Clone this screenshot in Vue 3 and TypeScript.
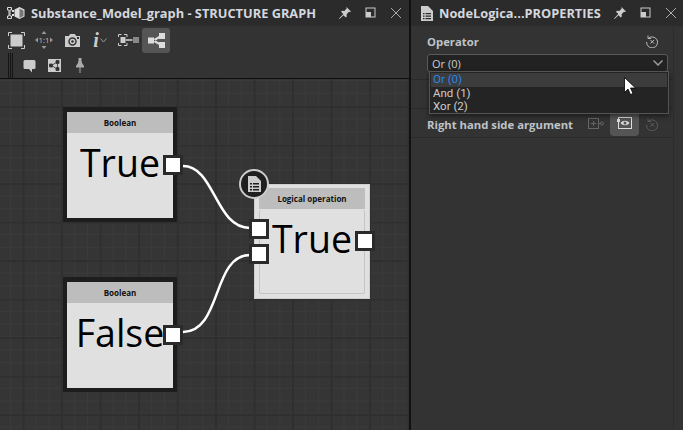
<script setup lang="ts">
interface BoolNode {
  title: string
  value: string
  top: number
}

const boolNodes: BoolNode[] = [
  { title: 'Boolean', value: 'True', top: 28 },
  { title: 'Boolean', value: 'False', top: 198 },
]

const options = ['Or (0)', 'And (1)', 'Xor (2)']
</script>

<template>
  <div class="app">
    <section class="panel panel--graph">
      <header class="tab">
        <svg class="tab__icon" width="18" height="14" viewBox="0 0 18 14" aria-hidden="true">
          <path d="M.5 1.500h4v2.500H3v6h1.500v2.500h-4V10H2V4H.5z" fill="none" stroke="#ddd" />
          <path d="M5 4h2v2H5zM5 8h2v2H5z" fill="#ddd" />
          <path d="M12.500 1l5 2.500v7l-5 2.500-5-2.500v-7z" fill="#ddd" />
          <path d="M12.500 2.500V12l4-2V4.500z" fill="#777" />
        </svg>
        <span class="tab__title">Substance_Model_graph - STRUCTURE GRAPH</span>
        <div class="tab__actions">
          <svg width="14" height="14" viewBox="0 0 14 14" aria-hidden="true">
            <path d="M8.500 1l4.500 4.500-1 .6-1-.3-2.400 2.400.2 2.300-1 1-2.300-2.300L1.500 13 1 12.500l4.300-4.500L3 5.700l1-1 2.300.2L8.700 2.500 8.400 1.500z" fill="#ccc" />
          </svg>
          <svg width="12" height="12" viewBox="0 0 12 12" aria-hidden="true">
            <rect x="1" y="1" width="9" height="9" fill="none" stroke="#ccc" />
            <rect x="1" y="5" width="5" height="5" fill="#ccc" />
          </svg>
          <svg width="12" height="12" viewBox="0 0 12 12" aria-hidden="true">
            <path d="M1 1l10 10M11 1L1 11" stroke="#aaa" fill="none" />
          </svg>
        </div>
      </header>

      <div class="toolbar">
        <div class="toolbar__row">
          <button type="button" class="tool">
            <svg width="17" height="17" viewBox="0 0 17 17" aria-hidden="true">
              <rect x="2.500" y="2.500" width="12" height="12" fill="#ccc" />
              <path d="M.5 4V.5H4M13 .5h3.500V4M16.500 13v3.500H13M4 16.500H.5V13" fill="none" stroke="#ccc" />
            </svg>
          </button>
          <button type="button" class="tool">
            <svg width="20" height="20" viewBox="0 0 20 20" aria-hidden="true">
              <path d="M10 1l2.500 3h-5zM10 19l-2.500-3h5zM1 10l3-2.500v5zM19 10l-3 2.500v-5z" fill="#999" />
              <text x="10" y="13" class="tool__ratio">1:1</text>
            </svg>
          </button>
          <button type="button" class="tool">
            <svg width="17" height="15" viewBox="0 0 17 15" aria-hidden="true">
              <path d="M1 3h4l1-2h5l1 2h4v11H1z" fill="#ccc" />
              <circle cx="8.500" cy="8.500" r="3.500" fill="none" stroke="#333" stroke-width="1.500" />
              <circle cx="8.500" cy="8.500" r="1.300" fill="#333" />
              <rect x="13" y="4" width="2" height="2" fill="#333" />
            </svg>
          </button>
          <button type="button" class="tool tool--info">
            <span class="tool__i">i</span>
            <svg width="7" height="5" viewBox="0 0 7 5" aria-hidden="true">
              <path d="M.5 .5L3.500 4 6.500 .5" fill="none" stroke="#999" />
            </svg>
          </button>
          <button type="button" class="tool">
            <svg width="21" height="12" viewBox="0 0 21 12" aria-hidden="true">
              <path d="M.5 3V.5h3M.5 9v2.500h3M6 .5h3V3M6 11.500h3V9" fill="none" stroke="#ccc" />
              <rect x="2.500" y="3" width="5" height="6" fill="#ccc" />
              <rect x="7.500" y="5" width="7" height="2" fill="#aaa" />
              <rect x="15" y="3" width="6" height="6" fill="#888" />
            </svg>
          </button>
          <button type="button" class="tool tool--active">
            <svg width="17" height="15" viewBox="0 0 17 15" aria-hidden="true">
              <rect x="0" y="4.500" width="6" height="6" fill="#ddd" />
              <rect x="11" y="0" width="6" height="6" fill="#ddd" />
              <rect x="11" y="9" width="6" height="6" fill="#ddd" />
              <path d="M5 6.500l6-3.500v2.500L6 8.500zM5 8.500l6 3.500V9.500L6 6.500z" fill="#ddd" />
            </svg>
          </button>
        </div>
        <div class="toolbar__row toolbar__row--second">
          <span class="grip" />
          <button type="button" class="tool tool--small">
            <svg width="13" height="14" viewBox="0 0 13 14" aria-hidden="true">
              <path d="M2 1h9a1.500 1.500 0 0 1 1.500 1.500v6A1.500 1.500 0 0 1 11 10H9v3.500L6 10H2A1.500 1.500 0 0 1 .5 8.500v-6A1.500 1.500 0 0 1 2 1z" fill="#ccc" />
            </svg>
          </button>
          <button type="button" class="tool tool--small">
            <svg width="13" height="13" viewBox="0 0 13 13" aria-hidden="true">
              <path d="M0 0h13v13H0z" fill="#ccc" />
              <path d="M1.500 5h3v3h-3zM8 1.500h3v3H8zM8 8.500h3v3H8zM4.500 6L8 3.500M4.500 7L8 9.500M9.500 4.500v4" fill="#333" stroke="#333" stroke-width=".8" />
            </svg>
          </button>
          <button type="button" class="tool tool--small">
            <svg width="10" height="15" viewBox="0 0 10 15" aria-hidden="true">
              <path d="M3.500 0h3v2l.5 3L9 8v1.500H1V8l2-3 .5-3z" fill="#aaa" />
              <path d="M5 9v6" stroke="#aaa" />
            </svg>
          </button>
        </div>
      </div>

      <div class="graph">
        <svg class="wires" width="409" height="430" viewBox="0 0 409 430" aria-hidden="true">
          <path d="M183 166C215 166 215 228 250 228" fill="none" stroke="#fff" stroke-width="2.500" />
          <path d="M183 332C222 332 212 255 250 255" fill="none" stroke="#fff" stroke-width="2.500" />
        </svg>

        <div
          v-for="node in boolNodes"
          :key="node.value"
          class="node"
          :style="{ top: node.top + 'px' }"
        >
          <div class="node__head">{{ node.title }}</div>
          <div class="node__value">{{ node.value }}</div>
          <span class="port port--out" />
        </div>

        <div class="logic">
          <div class="logic__head">Logical operation</div>
          <div class="logic__value">True</div>
          <span class="port port--a" />
          <span class="port port--b" />
          <span class="port port--c" />
          <span class="badge">
            <svg width="13" height="16" viewBox="0 0 13 16" aria-hidden="true">
              <path d="M0 0h8l5 5v11H0z" fill="#ccc" />
              <path d="M2 7h2v1.500H2zM5 7h6v1.500H5zM2 10h2v1.500H2zM5 10h6v1.500H5zM2 13h2v1.500H2zM5 13h6v1.500H5z" fill="#1f1f1f" />
            </svg>
          </span>
        </div>
      </div>
    </section>

    <section class="panel panel--props">
      <header class="tab tab--props">
        <svg class="tab__icon" width="12" height="15" viewBox="0 0 12 15" aria-hidden="true">
          <path d="M0 0h7l5 5v10H0z" fill="#ccc" />
          <path d="M2 7h1.500v1.200H2zM4.500 7H10v1.200H4.500zM2 9.500h1.500v1.200H2zM4.500 9.500H10v1.200H4.500zM2 12h1.500v1.200H2zM4.500 12H10v1.200H4.500z" fill="#2c2c2c" />
        </svg>
        <span class="tab__title">NodeLogica...PROPERTIES</span>
        <div class="tab__actions">
          <svg width="14" height="14" viewBox="0 0 14 14" aria-hidden="true">
            <path d="M8.500 1l4.500 4.500-1 .6-1-.3-2.400 2.400.2 2.300-1 1-2.300-2.300L1.500 13 1 12.500l4.300-4.500L3 5.700l1-1 2.300.2L8.700 2.500 8.400 1.500z" fill="#ccc" />
          </svg>
          <svg width="12" height="12" viewBox="0 0 12 12" aria-hidden="true">
            <rect x="1" y="1" width="9" height="9" fill="none" stroke="#ccc" />
            <rect x="1" y="5" width="5" height="5" fill="#ccc" />
          </svg>
          <svg width="12" height="12" viewBox="0 0 12 12" aria-hidden="true">
            <path d="M1 1l10 10M11 1L1 11" stroke="#aaa" fill="none" />
          </svg>
        </div>
      </header>

      <div class="props">
        <div class="prop prop--operator">
          <div class="prop__line">
            <span class="prop__label">Operator</span>
            <svg class="reset" width="14" height="14" viewBox="0 0 14 14" aria-hidden="true">
              <path d="M3 1.500v3h3M3.200 4.500A5.500 5.500 0 1 1 1.600 8" fill="none" stroke="#bbb" />
              <path d="M5.500 6l3.500 3.500M9 6L5.500 9.500" stroke="#bbb" fill="none" />
            </svg>
          </div>
          <div class="combo">
            <span>Or (0)</span>
            <svg width="10" height="6" viewBox="0 0 10 6" aria-hidden="true">
              <path d="M.5 .5L5 5 9.500 .5" fill="none" stroke="#999" stroke-width="1.500" />
            </svg>
          </div>
        </div>
        <div class="prop prop--hidden" />
        <div class="prop prop--right">
          <span class="prop__label">Right hand side argument</span>
          <div class="prop__tools">
            <span class="mini">
              <svg width="16" height="12" viewBox="0 0 16 12" aria-hidden="true">
                <rect x=".5" y=".5" width="10" height="10" fill="none" stroke="#666" />
                <path d="M3 5.500h5M5.500 3v5M10 5.500h3" stroke="#666" fill="none" />
                <circle cx="14" cy="5.500" r="1.500" fill="none" stroke="#666" />
              </svg>
            </span>
            <span class="mini mini--on">
              <svg width="15" height="12" viewBox="0 0 15 12" aria-hidden="true">
                <rect x="1.500" y=".5" width="13" height="11" fill="none" stroke="#ddd" />
                <rect x="0" y="2" width="3" height="3" fill="#ddd" />
                <path d="M3.500 6C6 3 10 3 12.500 6 10 9 6 9 3.500 6z" fill="#ddd" />
                <circle cx="8" cy="6" r="1.500" fill="#555" />
              </svg>
            </span>
            <svg class="reset" width="14" height="14" viewBox="0 0 14 14" aria-hidden="true">
              <path d="M3 1.500v3h3M3.200 4.500A5.500 5.500 0 1 1 1.600 8" fill="none" stroke="#5c5c5c" />
              <path d="M5.500 6l3.500 3.500M9 6L5.500 9.500" stroke="#5c5c5c" fill="none" />
            </svg>
          </div>
        </div>
      </div>

      <ul class="popup">
        <li
          v-for="(option, i) in options"
          :key="option"
          class="popup__item"
          :class="{ 'popup__item--current': i === 0 }"
        >
          {{ option }}
        </li>
      </ul>

      <svg class="cursor" width="12" height="18" viewBox="0 0 12 18" aria-hidden="true">
        <path d="M.5 .5v15l3.500-3.500 2.500 5.500 2.500-1-2.500-5.500h5z" fill="#fff" stroke="#000" stroke-width=".8" />
      </svg>
    </section>
  </div>
</template>

<style>
html,
body {
  margin: 0;
  background: #000;
}
</style>

<style scoped>
.app {
  display: flex;
  width: 683px;
  height: 430px;
  overflow: hidden;
  background: #111;
  font-family: 'Open Sans', 'Noto Sans', sans-serif;
}

.panel {
  position: relative;
  display: flex;
  flex-direction: column;
  background: #333;
}

.panel--graph {
  width: 409px;
  flex: none;
}

.panel--props {
  width: 272px;
  margin-left: 2px;
  flex: none;
}

.tab {
  display: flex;
  align-items: center;
  height: 26px;
  flex: none;
  padding: 0 7px 0 7px;
  background: #2b2b2b;
  color: #d4d8de;
}

.tab--props {
  padding-left: 10px;
  padding-right: 6px;
}

.tab__icon {
  margin-right: 6px;
  flex: none;
}

.tab__title {
  font-size: 12.800px;
  font-weight: 700;
  white-space: nowrap;
}

.tab__actions {
  display: flex;
  align-items: center;
  gap: 13px;
  margin-left: auto;
}

.toolbar {
  height: 53px;
  flex: none;
  padding-top: 1px;
  box-sizing: border-box;
  border-bottom: 1px solid #0d0d0d;
}

.toolbar__row {
  display: flex;
  align-items: center;
  height: 26px;
  padding-left: 2px;
}

.toolbar__row--second {
  height: 25px;
  padding-left: 8px;
}

.tool {
  display: flex;
  align-items: center;
  justify-content: center;
  width: 28px;
  height: 25px;
  padding: 0;
  border: none;
  border-radius: 3px;
  background: transparent;
}

.tool--small {
  width: 25px;
}

.tool--info {
  gap: 1px;
}

.tool--active {
  background: #555;
}

.tool__ratio {
  fill: #bbb;
  font-size: 8px;
  text-anchor: middle;
  font-family: 'Open Sans', sans-serif;
}

.tool__i {
  color: #ccc;
  font-family: 'Liberation Serif', serif;
  font-size: 20px;
  font-style: italic;
  font-weight: 700;
  line-height: 1;
}

.grip {
  width: 1px;
  height: 25px;
  margin-right: 4px;
  border-left: 1px solid #151515;
  border-right: 1px solid #151515;
  padding: 0 1px;
  background: #151515 content-box;
}

.graph {
  position: relative;
  flex: 1;
  background-color: #353535;
  background-image:
    linear-gradient(#2f2f2f 2px, transparent 2px),
    linear-gradient(90deg, #2f2f2f 2px, transparent 2px),
    linear-gradient(#3b3b3b 1px, transparent 1px),
    linear-gradient(90deg, #3b3b3b 1px, transparent 1px);
  background-size: 38.500px 38.500px, 38.500px 38.500px, 12.830px 12.830px, 12.830px 12.830px;
  background-position: 0 27px, 22.500px 0, 0 1px, 10px 0;
}

.wires {
  position: absolute;
  top: -79px;
  left: 0;
  pointer-events: none;
}

.node {
  position: absolute;
  left: 63px;
  width: 106px;
  height: 106px;
  border: 4px solid #1d1d1d;
  border-top-width: 5px;
  background: #e0e0e0;
  color: #000;
}

.node__head,
.logic__head {
  display: flex;
  align-items: center;
  justify-content: center;
  height: 21px;
  background: #bdbdbd;
  color: #111;
  font-size: 8px;
  font-weight: 700;
}

.node__value,
.logic__value {
  font-size: 37.500px;
  line-height: 50px;
  text-align: center;
  white-space: nowrap;
}

.node__value {
  margin-top: 5px;
}

.logic {
  position: absolute;
  top: 105px;
  left: 254px;
  width: 106px;
  height: 106px;
  padding: 4px 5px 5px;
  background: #e0e0e0;
  color: #000;
  box-shadow: inset 0 0 0 1px #cfcfcf;
}

.logic::after {
  content: '';
  position: absolute;
  inset: 26px 5px 5px;
  border: 1px solid #c4c4c4;
  border-top: none;
  border-radius: 2px;
  pointer-events: none;
}

.logic__value {
  margin-top: 5px;
}

.port {
  position: absolute;
  width: 14px;
  height: 14px;
  border: 3px solid #2a2a2a;
  background: #fff;
  z-index: 2;
}

.port--out {
  top: 43px;
  left: 96px;
}

.port--a {
  top: 35px;
  left: -5px;
}

.port--b {
  top: 60px;
  left: -5px;
}

.port--c {
  top: 47px;
  left: 101px;
}

.badge {
  position: absolute;
  top: -15px;
  left: -15px;
  display: flex;
  align-items: center;
  justify-content: center;
  width: 26px;
  height: 26px;
  border: 2px solid #ccc;
  border-radius: 50%;
  background: #1f1f1f;
}

.props {
  display: flex;
  flex-direction: column;
  flex: 1;
  box-sizing: border-box;
  margin-right: 9px;
  border-right: 1px solid #2c2c2c;
  width: 263px;
  color: #bfc3c8;
}

.prop {
  box-sizing: border-box;
  border-bottom: 1px solid #2a2a2a;
}

.prop--operator {
  height: 54px;
  padding: 7px 6px 0 16px;
}

.prop--hidden {
  height: 29px;
}

.prop--right {
  display: flex;
  align-items: center;
  height: 29px;
  padding: 2px 14px 0 16px;
}

.prop__line {
  display: flex;
  align-items: center;
  justify-content: space-between;
  height: 16px;
  padding-right: 8px;
}

.prop__label {
  font-size: 11.300px;
  font-weight: 700;
}

.combo {
  display: flex;
  align-items: center;
  justify-content: space-between;
  box-sizing: border-box;
  height: 18px;
  width: 241px;
  margin-top: 5px;
  padding: 0 4px;
  border: 1px solid #5a5a5a;
  border-radius: 3px;
  background: #222;
  color: #ccc;
  font-size: 11px;
}

.prop__tools {
  display: flex;
  align-items: center;
  margin-left: auto;
}

.mini {
  display: flex;
  align-items: center;
  justify-content: center;
  width: 29px;
  height: 26px;
}

.mini--on {
  margin-top: -2px;
  border-radius: 0 0 4px 4px;
  background: #555;
}

.prop__tools .reset {
  margin-left: 6px;
}

.popup {
  position: absolute;
  top: 71px;
  left: 18px;
  box-sizing: border-box;
  width: 240px;
  height: 43px;
  margin: 0;
  padding: 1px;
  border: 1px solid #555;
  background: #242424;
  list-style: none;
  box-shadow: 0 2px 5px rgba(0, 0, 0, 0.5);
}

.popup__item {
  height: 13.500px;
  padding: 0 2px;
  color: #ccc;
  font-family: Roboto, sans-serif;
  font-size: 11.500px;
  line-height: 13.500px;
}

.popup__item--current {
  background: #3c3c3c;
  color: #2b86e6;
}

.cursor {
  position: absolute;
  top: 77px;
  left: 213px;
}
</style>
